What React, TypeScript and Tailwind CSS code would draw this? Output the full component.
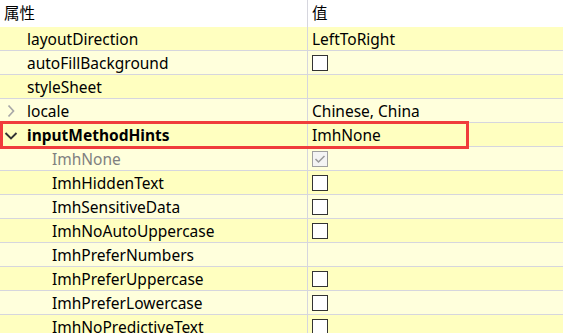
import React from 'react';

type Row = {
  name: string;
  value?: string;
  check?: 'off' | 'on-disabled';
  indent?: boolean;
  arrow?: 'right' | 'down';
  bold?: boolean;
  disabled?: boolean;
};

const rows: Row[] = [
  { name: 'layoutDirection', value: 'LeftToRight' },
  { name: 'autoFillBackground', check: 'off' },
  { name: 'styleSheet' },
  { name: 'locale', value: 'Chinese, China', arrow: 'right' },
  { name: 'inputMethodHints', value: 'ImhNone', arrow: 'down', bold: true },
  { name: 'ImhNone', check: 'on-disabled', indent: true, disabled: true },
  { name: 'ImhHiddenText', check: 'off', indent: true },
  { name: 'ImhSensitiveData', check: 'off', indent: true },
  { name: 'ImhNoAutoUppercase', check: 'off', indent: true },
  { name: 'ImhPreferNumbers', indent: true },
  { name: 'ImhPreferUppercase', check: 'off', indent: true },
  { name: 'ImhPreferLowercase', check: 'off', indent: true },
  { name: 'ImhNoPredictiveText', check: 'off', indent: true },
];

function Arrow({ dir }: { dir: 'right' | 'down' }) {
  if (dir === 'right') {
    return (
      <svg width="12" height="14" viewBox="0 0 12 14" className="absolute left-[5px] top-[5px]">
        <path d="M3.5 1.5 L8.5 7 L3.5 12.5" fill="none" stroke="#a8a8a8" strokeWidth="1.7" />
      </svg>
    );
  }
  return (
    <svg width="14" height="10" viewBox="0 0 14 10" className="absolute left-[4px] top-[8px]">
      <path d="M1.5 2 L7 7.5 L12.5 2" fill="none" stroke="#333" strokeWidth="1.9" />
    </svg>
  );
}

function Check({ kind }: { kind: 'off' | 'on-disabled' }) {
  if (kind === 'on-disabled') {
    return (
      <div className="w-[16px] h-[16px] border border-[#a0a0a0] bg-[#f4f4f4] flex items-center justify-center">
        <svg width="12" height="10" viewBox="0 0 12 10">
          <path d="M1.5 5 L4.5 8 L10.5 2" fill="none" stroke="#9a9a9a" strokeWidth="1.5" />
        </svg>
      </div>
    );
  }
  return <div className="w-[16px] h-[16px] border-[1.5px] border-[#333] bg-white" />;
}

export default function App() {
  return (
    <div
      className="relative w-[563px] h-[333px] overflow-hidden bg-white text-[15.5px] text-black"
      style={{ fontFamily: '"Noto Sans", "Noto Sans CJK SC", sans-serif' }}
    >
      <div className="grid grid-cols-[308px_1fr] h-[27px] leading-[27px]">
        <div className="pl-[4px] border-r border-[#d6d6de]">属性</div>
        <div className="pl-[4px]">值</div>
      </div>
      {rows.map((r, i) => (
        <div
          key={r.name}
          className={
            'grid grid-cols-[308px_1fr] h-[24px] border-b border-[#d6d6de] ' +
            (i % 2 === 0 ? 'bg-[#ffffc0]' : 'bg-[#ffffdc]')
          }
        >
          <div
            className={
              'relative border-r border-[#d6d6de] leading-[24px] ' +
              (r.indent ? 'pl-[52px] ' : 'pl-[27px] ') +
              (r.bold ? 'font-bold ' : '') +
              (r.disabled ? 'text-[#808080]' : '')
            }
          >
            {r.arrow && <Arrow dir={r.arrow} />}
            {r.name}
          </div>
          <div className="pl-[4px] leading-[24px] flex items-center">
            {r.value && <span>{r.value}</span>}
            {r.check && <Check kind={r.check} />}
          </div>
        </div>
      ))}
      <div className="absolute left-0 top-[121px] w-[469px] h-[28px] border-[3px] border-[#f03c3c]" />
    </div>
  );
}
